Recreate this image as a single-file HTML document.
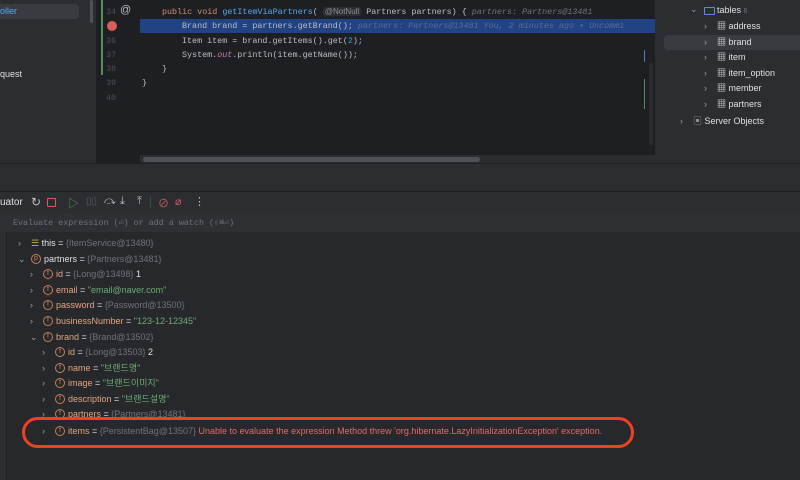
<!DOCTYPE html>
<html><head><meta charset="utf-8"><style>
*{margin:0;padding:0;box-sizing:border-box}
body{width:800px;height:480px;overflow:hidden;background:#2b2d30;position:relative;font-family:"Liberation Sans","Noto Sans CJK KR",sans-serif;color:#dfe1e5}
.a{position:absolute;white-space:nowrap}
.m{font-family:"Liberation Mono",monospace;font-size:8.4px;line-height:14px}
.kw{color:#cf8e6d}.fn{color:#56a8f5}.num{color:#2aacb8}.pur{color:#c77dbb}.cm{color:#6f737a;font-style:italic}
.ln{color:#4b5059;font-size:8.4px;line-height:14px;font-family:"Liberation Mono",monospace;left:106px}
.t{font-size:9px}
.r{font-size:9px;line-height:14px;height:14px}
.g{color:#6f737a}.s{color:#6aab73}.o{color:#e6a57e}
.fi{display:inline-block;width:10px;height:10px;border:1px solid #c77f55;border-radius:50%;font-size:7px;line-height:8px;text-align:center;color:#c77f55;vertical-align:middle;margin-right:3px;margin-top:-2px}
.ar{color:#9da0a8;font-size:9px;display:inline-block;width:13px}
</style></head><body>
<div class="a" style="left:0;top:0;width:96px;height:163px;background:#2b2d30"></div>
<div class="a" style="left:0;top:4px;width:79px;height:15px;background:#393b40;border-radius:0 4px 4px 0"></div>
<div class="a t" style="left:0;top:6px;color:#56a8f5">oller</div>
<div class="a t" style="left:0;top:69px">quest</div>
<div class="a" style="left:90px;top:0;width:3px;height:23px;background:#4e5157;border-radius:2px"></div>
<div class="a" style="left:96px;top:0;width:559px;height:163px;background:#1e1f22"></div>
<div class="a" style="left:101px;top:0;width:2px;height:75px;background:#549159"></div>
<div class="a" style="left:140px;top:19px;width:515px;height:14px;background:#214283"></div>
<div class="a ln" style="top:5px">34</div>
<div class="a" style="left:120px;top:4px;font-size:11px;color:#bcbec4">@</div>
<div class="a" style="left:107px;top:21px;width:10px;height:10px;border-radius:50%;background:#db5c5c"></div>
<div class="a ln" style="top:34px">36</div>
<div class="a ln" style="top:48px">37</div>
<div class="a ln" style="top:62px">38</div>
<div class="a ln" style="top:76px">39</div>
<div class="a ln" style="top:91px">40</div>
<div class="a m" style="left:162px;top:5px;color:#bcbec4"><span class="kw">public void </span><span class="fn">getItemViaPartners</span>( <span style="background:#2b2d30;color:#8c8f94;font-family:'Liberation Sans';font-size:8px;padding:0 2px">@NotNull</span> Partners partners) {  <span class="cm">partners: Partners@13481</span></div>
<div class="a m" style="left:182px;top:19px;color:#bcbec4">Brand brand = partners.getBrand();  <span class="cm" style="color:#5a6e98">partners: Partners@13481    You, 2 minutes ago • Uncommi</span></div>
<div class="a m" style="left:182px;top:34px;color:#bcbec4">Item item = brand.getItems().get(<span class="num">2</span>);</div>
<div class="a m" style="left:182px;top:48px;color:#bcbec4">System.<span class="pur" style="font-style:italic">out</span>.println(item.getName());</div>
<div class="a m" style="left:162px;top:62px;color:#bcbec4">}</div>
<div class="a m" style="left:142px;top:76px;color:#bcbec4">}</div>
<div class="a" style="left:644px;top:50px;width:1px;height:12px;background:#4f7cc7"></div>
<div class="a" style="left:644px;top:79px;width:1px;height:30px;background:#549159"></div>
<div class="a" style="left:649px;top:63px;width:4px;height:82px;background:#2b2d30;border-radius:2px"></div>
<div class="a" style="left:140px;top:155px;width:515px;height:8px;background:#2b2d30"></div>
<div class="a" style="left:143px;top:157px;width:337px;height:5px;background:#4e5157;border-radius:3px"></div>
<div class="a" style="left:655px;top:0;width:145px;height:163px;background:#2b2d30"></div>
<div class="a" style="left:664px;top:35px;width:136px;height:15px;background:#393b40;border-radius:4px 0 0 4px"></div>
<div class="a ar" style="left:690px;top:4px">⌄</div>
<div class="a" style="left:704px;top:7px;width:11px;height:8px;border:1px solid #548af7;border-radius:1px"></div>
<div class="a t" style="left:717px;top:5px">tables <span class="g" style="font-size:7px">6</span></div>
<div class="a t" style="left:704px;top:19px;line-height:15.5px"><span class="ar">›</span>▦ address<br><span class="ar">›</span>▦ brand<br><span class="ar">›</span>▦ item<br><span class="ar">›</span>▦ item_option<br><span class="ar">›</span>▦ member<br><span class="ar">›</span>▦ partners</div>
<div class="a t" style="left:680px;top:114px"><span class="ar">›</span><span style="color:#8c8f94">▣</span> Server Objects</div>
<div class="a" style="left:0;top:163px;width:800px;height:28px;background:#2b2d30;border-top:1px solid #1e1f22"></div>
<div class="a" style="left:0;top:191px;width:800px;height:1px;background:#1e1f22"></div>
<div class="a" style="left:0;top:197px;font-size:10px">uator</div>
<div class="a" style="left:31px;top:195px;font-size:12px;color:#bcbec4">↻</div>
<div class="a" style="left:47px;top:198px;width:9px;height:9px;border:1.5px solid #db5c5c;border-radius:1px"></div>
<div class="a" style="left:68px;top:195px;font-size:11px;color:#57965c">▷</div>
<div class="a" style="left:86px;top:196px;font-size:10px;color:#5a5d63">▯▯</div>
<div class="a" style="left:104px;top:195px;font-size:11px;color:#bcbec4">⤼</div>
<div class="a" style="left:120px;top:195px;font-size:11px;color:#bcbec4">⤓</div>
<div class="a" style="left:137px;top:195px;font-size:11px;color:#bcbec4">⤒</div>
<div class="a" style="left:150px;top:196px;width:1px;height:12px;background:#43454a"></div>
<div class="a" style="left:158px;top:195px;font-size:11px;color:#db5c5c">⊘</div>
<div class="a" style="left:175px;top:195px;font-size:11px;color:#db5c5c">⌀</div>
<div class="a" style="left:194px;top:195px;font-size:11px;color:#bcbec4">⋮</div>
<div class="a" style="left:0;top:213px;width:800px;height:19px;background:#2f3033"></div>
<div class="a m" style="left:13px;top:216px;color:#6f737a">Evaluate expression (⏎) or add a watch (⇧⌘⏎)</div>
<div class="a" style="left:0;top:232px;width:7px;height:248px;background:#2b2d30;border-right:1px solid #1e1f22"></div>
<div class="a" style="left:7px;top:232px;width:793px;height:248px;background:#27282b"></div>
<div class="a r" style="left:18px;top:236px"><span class="ar">›</span><span style="color:#c9a857">☰</span> this = <span class="g">{ItemService@13480}</span></div>
<div class="a r" style="left:18px;top:252px"><span class="ar">⌄</span><span class="fi">p</span>partners = <span class="g">{Partners@13481}</span></div>
<div class="a r" style="left:30px;top:267px"><span class="ar">›</span><span class="fi">f</span><span class="o">id</span> = <span class="g">{Long@13498}</span> 1</div>
<div class="a r" style="left:30px;top:283px"><span class="ar">›</span><span class="fi">f</span><span class="o">email</span> = <span class="s">"email@naver.com"</span></div>
<div class="a r" style="left:30px;top:298px"><span class="ar">›</span><span class="fi">f</span><span class="o">password</span> = <span class="g">{Password@13500}</span></div>
<div class="a r" style="left:30px;top:314px"><span class="ar">›</span><span class="fi">f</span><span class="o">businessNumber</span> = <span class="s">"123-12-12345"</span></div>
<div class="a r" style="left:30px;top:330px"><span class="ar">⌄</span><span class="fi">f</span><span class="o">brand</span> = <span class="g">{Brand@13502}</span></div>
<div class="a r" style="left:42px;top:345px"><span class="ar">›</span><span class="fi">f</span><span class="o">id</span> = <span class="g">{Long@13503}</span> 2</div>
<div class="a r" style="left:42px;top:361px"><span class="ar">›</span><span class="fi">f</span><span class="o">name</span> = <span class="s">"브랜드명"</span></div>
<div class="a r" style="left:42px;top:376px"><span class="ar">›</span><span class="fi">f</span><span class="o">image</span> = <span class="s">"브랜드이미지"</span></div>
<div class="a r" style="left:42px;top:392px"><span class="ar">›</span><span class="fi">f</span><span class="o">description</span> = <span class="s">"브랜드설명"</span></div>
<div class="a r" style="left:42px;top:407px"><span class="ar">›</span><span class="fi">f</span><span class="o">partners</span> = <span class="g">{Partners@13481}</span></div>
<div class="a" style="left:22px;top:417px;width:612px;height:31px;border:3px solid #f0401e;border-radius:16px;background:#27282b"></div>
<div class="a r" style="left:42px;top:424px"><span class="ar">›</span><span class="fi">f</span><span class="o">items</span> = <span class="g">{PersistentBag@13507}</span> <span style="color:#e06c6c">Unable to evaluate the expression Method threw 'org.hibernate.LazyInitializationException' exception.</span></div>
</body></html>
